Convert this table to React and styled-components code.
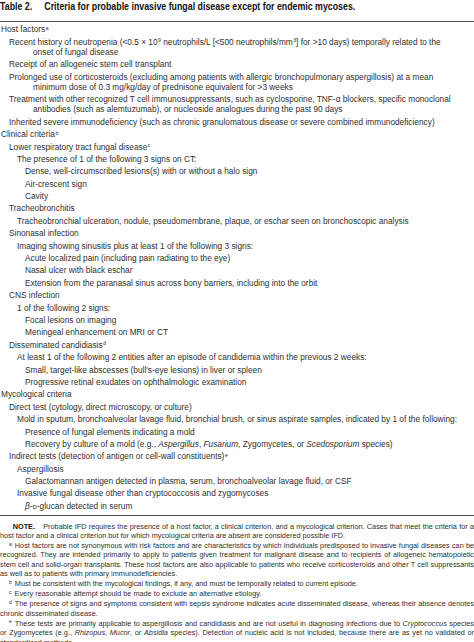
import React from 'react';
import styled, { createGlobalStyle } from 'styled-components';

const Global = createGlobalStyle`
  html, body { margin: 0; padding: 0; background: #fff; }
  body {
    font-family: "Liberation Sans", Arial, Helvetica, sans-serif;
    color: #2f2f2f;
  }
`;

const Page = styled.div`
  width: 474px;
  height: 642px;
  overflow: hidden;
`;

const Caption = styled.div`
  padding-top: 0.5px;
  padding-bottom: 9px;
  border-bottom: 1px solid #4a4a4a;
`;

const CaptionText = styled.div`
  display: flex;
  gap: 14px;
  width: max-content;
  font-family: "Liberation Sans", Arial, sans-serif;
  font-weight: 700;
  font-size: 10.2px;
  line-height: 11px;
  color: #111;
  white-space: nowrap;
  transform: scaleX(0.865);
  transform-origin: left center;
`;

const Criteria = styled.div`
  font-size: 8.3px;
  line-height: 10.2px;
  white-space: nowrap;
  padding-top: 0.5px;
  padding-bottom: 4px;
  border-bottom: 1px solid #4a4a4a;
`;

const Row = styled.div`
  padding-top: 2.2px;
  padding-left: ${(p) => 1 + p.$level * 8}px;
`;

const Cont = styled.div`
  padding-left: 24px;
`;

const Sup = styled.sup`
  font-size: 0.62em;
  line-height: 0;
  vertical-align: 0.5em;
  margin-left: 0.5px;
`;

const I = styled.i`
  font-style: italic;
`;

const SmallCaps = styled.span`
  font-variant: small-caps;
`;

const Notes = styled.div`
  padding-top: 5.5px;
  font-size: 7.3px;
  line-height: 9.45px;
  color: #2f2f2f;
`;

const Para = styled.div`
  & + & {
    margin-top: 0.5px;
  }
`;

const Line = styled.div`
  text-align: ${(p) => (p.$last ? 'left' : 'justify')};
  text-align-last: ${(p) => (p.$last ? 'left' : 'justify')};
  padding-left: ${(p) => p.$indent || 0}px;
  white-space: normal;
`;

const Note = styled.b`
  font-weight: 700;
  color: #111;
  margin-right: 6px;
`;

const FootMark = styled.sup`
  font-size: 0.7em;
  line-height: 0;
  vertical-align: 0.45em;
  margin-right: 3px;
`;

const rows = [
  { l: 0, t: <>Host factors<Sup>a</Sup></> },
  {
    l: 1,
    t: <>Recent history of neutropenia (&lt;0.5 × 10<Sup>9</Sup> neutrophils/L [&lt;500 neutrophils/mm<Sup>3</Sup>] for &gt;10 days) temporally related to the</>,
    c: 'onset of fungal disease',
  },
  { l: 1, t: 'Receipt of an allogeneic stem cell transplant' },
  {
    l: 1,
    t: 'Prolonged use of corticosteroids (excluding among patients with allergic bronchopulmonary aspergillosis) at a mean',
    c: 'minimum dose of 0.3 mg/kg/day of prednisone equivalent for >3 weeks',
  },
  {
    l: 1,
    t: 'Treatment with other recognized T cell immunosuppressants, such as cyclosporine, TNF-α blockers, specific monoclonal',
    c: 'antibodies (such as alemtuzumab), or nucleoside analogues during the past 90 days',
  },
  { l: 1, t: 'Inherited severe immunodeficiency (such as chronic granulomatous disease or severe combined immunodeficiency)' },
  { l: 0, t: <>Clinical criteria<Sup>b</Sup></> },
  { l: 1, t: <>Lower respiratory tract fungal disease<Sup>c</Sup></> },
  { l: 2, t: 'The presence of 1 of the following 3 signs on CT:' },
  { l: 3, t: 'Dense, well-circumscribed lesions(s) with or without a halo sign' },
  { l: 3, t: 'Air-crescent sign' },
  { l: 3, t: 'Cavity' },
  { l: 1, t: 'Tracheobronchitis' },
  { l: 2, t: 'Tracheobronchial ulceration, nodule, pseudomembrane, plaque, or eschar seen on bronchoscopic analysis' },
  { l: 1, t: 'Sinonasal infection' },
  { l: 2, t: 'Imaging showing sinusitis plus at least 1 of the following 3 signs:' },
  { l: 3, t: 'Acute localized pain (including pain radiating to the eye)' },
  { l: 3, t: 'Nasal ulcer with black eschar' },
  { l: 3, t: 'Extension from the paranasal sinus across bony barriers, including into the orbit' },
  { l: 1, t: 'CNS infection' },
  { l: 2, t: '1 of the following 2 signs:' },
  { l: 3, t: 'Focal lesions on imaging' },
  { l: 3, t: 'Meningeal enhancement on MRI or CT' },
  { l: 1, t: <>Disseminated candidiasis<Sup>d</Sup></> },
  { l: 2, t: 'At least 1 of the following 2 entities after an episode of candidemia within the previous 2 weeks:' },
  { l: 3, t: "Small, target-like abscesses (bull's-eye lesions) in liver or spleen" },
  { l: 3, t: 'Progressive retinal exudates on ophthalmologic examination' },
  { l: 0, t: 'Mycological criteria' },
  { l: 1, t: 'Direct test (cytology, direct microscopy, or culture)' },
  { l: 2, t: 'Mold in sputum, bronchoalveolar lavage fluid, bronchial brush, or sinus aspirate samples, indicated by 1 of the following:' },
  { l: 3, t: 'Presence of fungal elements indicating a mold' },
  {
    l: 3,
    t: <>Recovery by culture of a mold (e.g., <I>Aspergillus</I>, <I>Fusarium</I>, Zygomycetes, or <I>Scedosporium</I> species)</>,
  },
  { l: 1, t: <>Indirect tests (detection of antigen or cell-wall constituents)<Sup>e</Sup></> },
  { l: 2, t: 'Aspergillosis' },
  { l: 3, t: 'Galactomannan antigen detected in plasma, serum, bronchoalveolar lavage fluid, or CSF' },
  { l: 2, t: 'Invasive fungal disease other than cryptococcosis and zygomycoses' },
  { l: 3, t: <><I>β</I>-<SmallCaps>d</SmallCaps>-glucan detected in serum</> },
];

const notes = [
  [
    { i: 12.7, t: <><Note>NOTE.</Note> Probable IFD requires the presence of a host factor, a clinical criterion, and a mycological criterion. Cases that meet the criteria for a</> },
    { t: 'host factor and a clinical criterion but for which mycological criteria are absent are considered possible IFD.', last: true },
  ],
  [
    { i: 9, t: <><FootMark>a</FootMark>Host factors are not synonymous with risk factors and are characteristics by which individuals predisposed to invasive fungal diseases can be</> },
    { t: 'recognized. They are intended primarily to apply to patients given treatment for malignant disease and to recipients of allogeneic hematopoietic' },
    { t: 'stem cell and solid-organ transplants. These host factors are also applicable to patients who receive corticosteroids and other T cell suppressants' },
    { t: 'as well as to patients with primary immunodeficiencies.', last: true },
  ],
  [
    { i: 9, t: <><FootMark>b</FootMark>Must be consistent with the mycological findings, if any, and must be temporally related to current episode.</>, last: true },
  ],
  [
    { i: 9, t: <><FootMark>c</FootMark>Every reasonable attempt should be made to exclude an alternative etiology.</>, last: true },
  ],
  [
    { i: 9, t: <><FootMark>d</FootMark>The presence of signs and symptoms consistent with sepsis syndrome indicates acute disseminated disease, whereas their absence denotes</> },
    { t: 'chronic disseminated disease.', last: true },
  ],
  [
    { i: 9, t: <><FootMark>e</FootMark>These tests are primarily applicable to aspergillosis and candidiasis and are not useful in diagnosing infections due to <I>Cryptococcus</I> species</> },
    { t: <>or Zygomycetes (e.g., <I>Rhizopus</I>, <I>Mucor</I>, or <I>Absidia</I> species). Detection of nucleic acid is not included, because there are as yet no validated or</> },
    { t: 'standardized methods.', last: true },
  ],
];

export default function App() {
  return (
    <Page>
      <Global />
      <Caption>
        <CaptionText>
          <span>Table 2.</span>
          <span>Criteria for probable invasive fungal disease except for endemic mycoses.</span>
        </CaptionText>
      </Caption>
      <Criteria>
        {rows.map((r, k) => (
          <Row key={k} $level={r.l}>
            {r.t}
            {r.c && <Cont>{r.c}</Cont>}
          </Row>
        ))}
      </Criteria>
      <Notes>
        {notes.map((p, k) => (
          <Para key={k}>
            {p.map((ln, j) => (
              <Line key={j} $indent={ln.i} $last={ln.last}>
                {ln.t}
              </Line>
            ))}
          </Para>
        ))}
      </Notes>
    </Page>
  );
}
